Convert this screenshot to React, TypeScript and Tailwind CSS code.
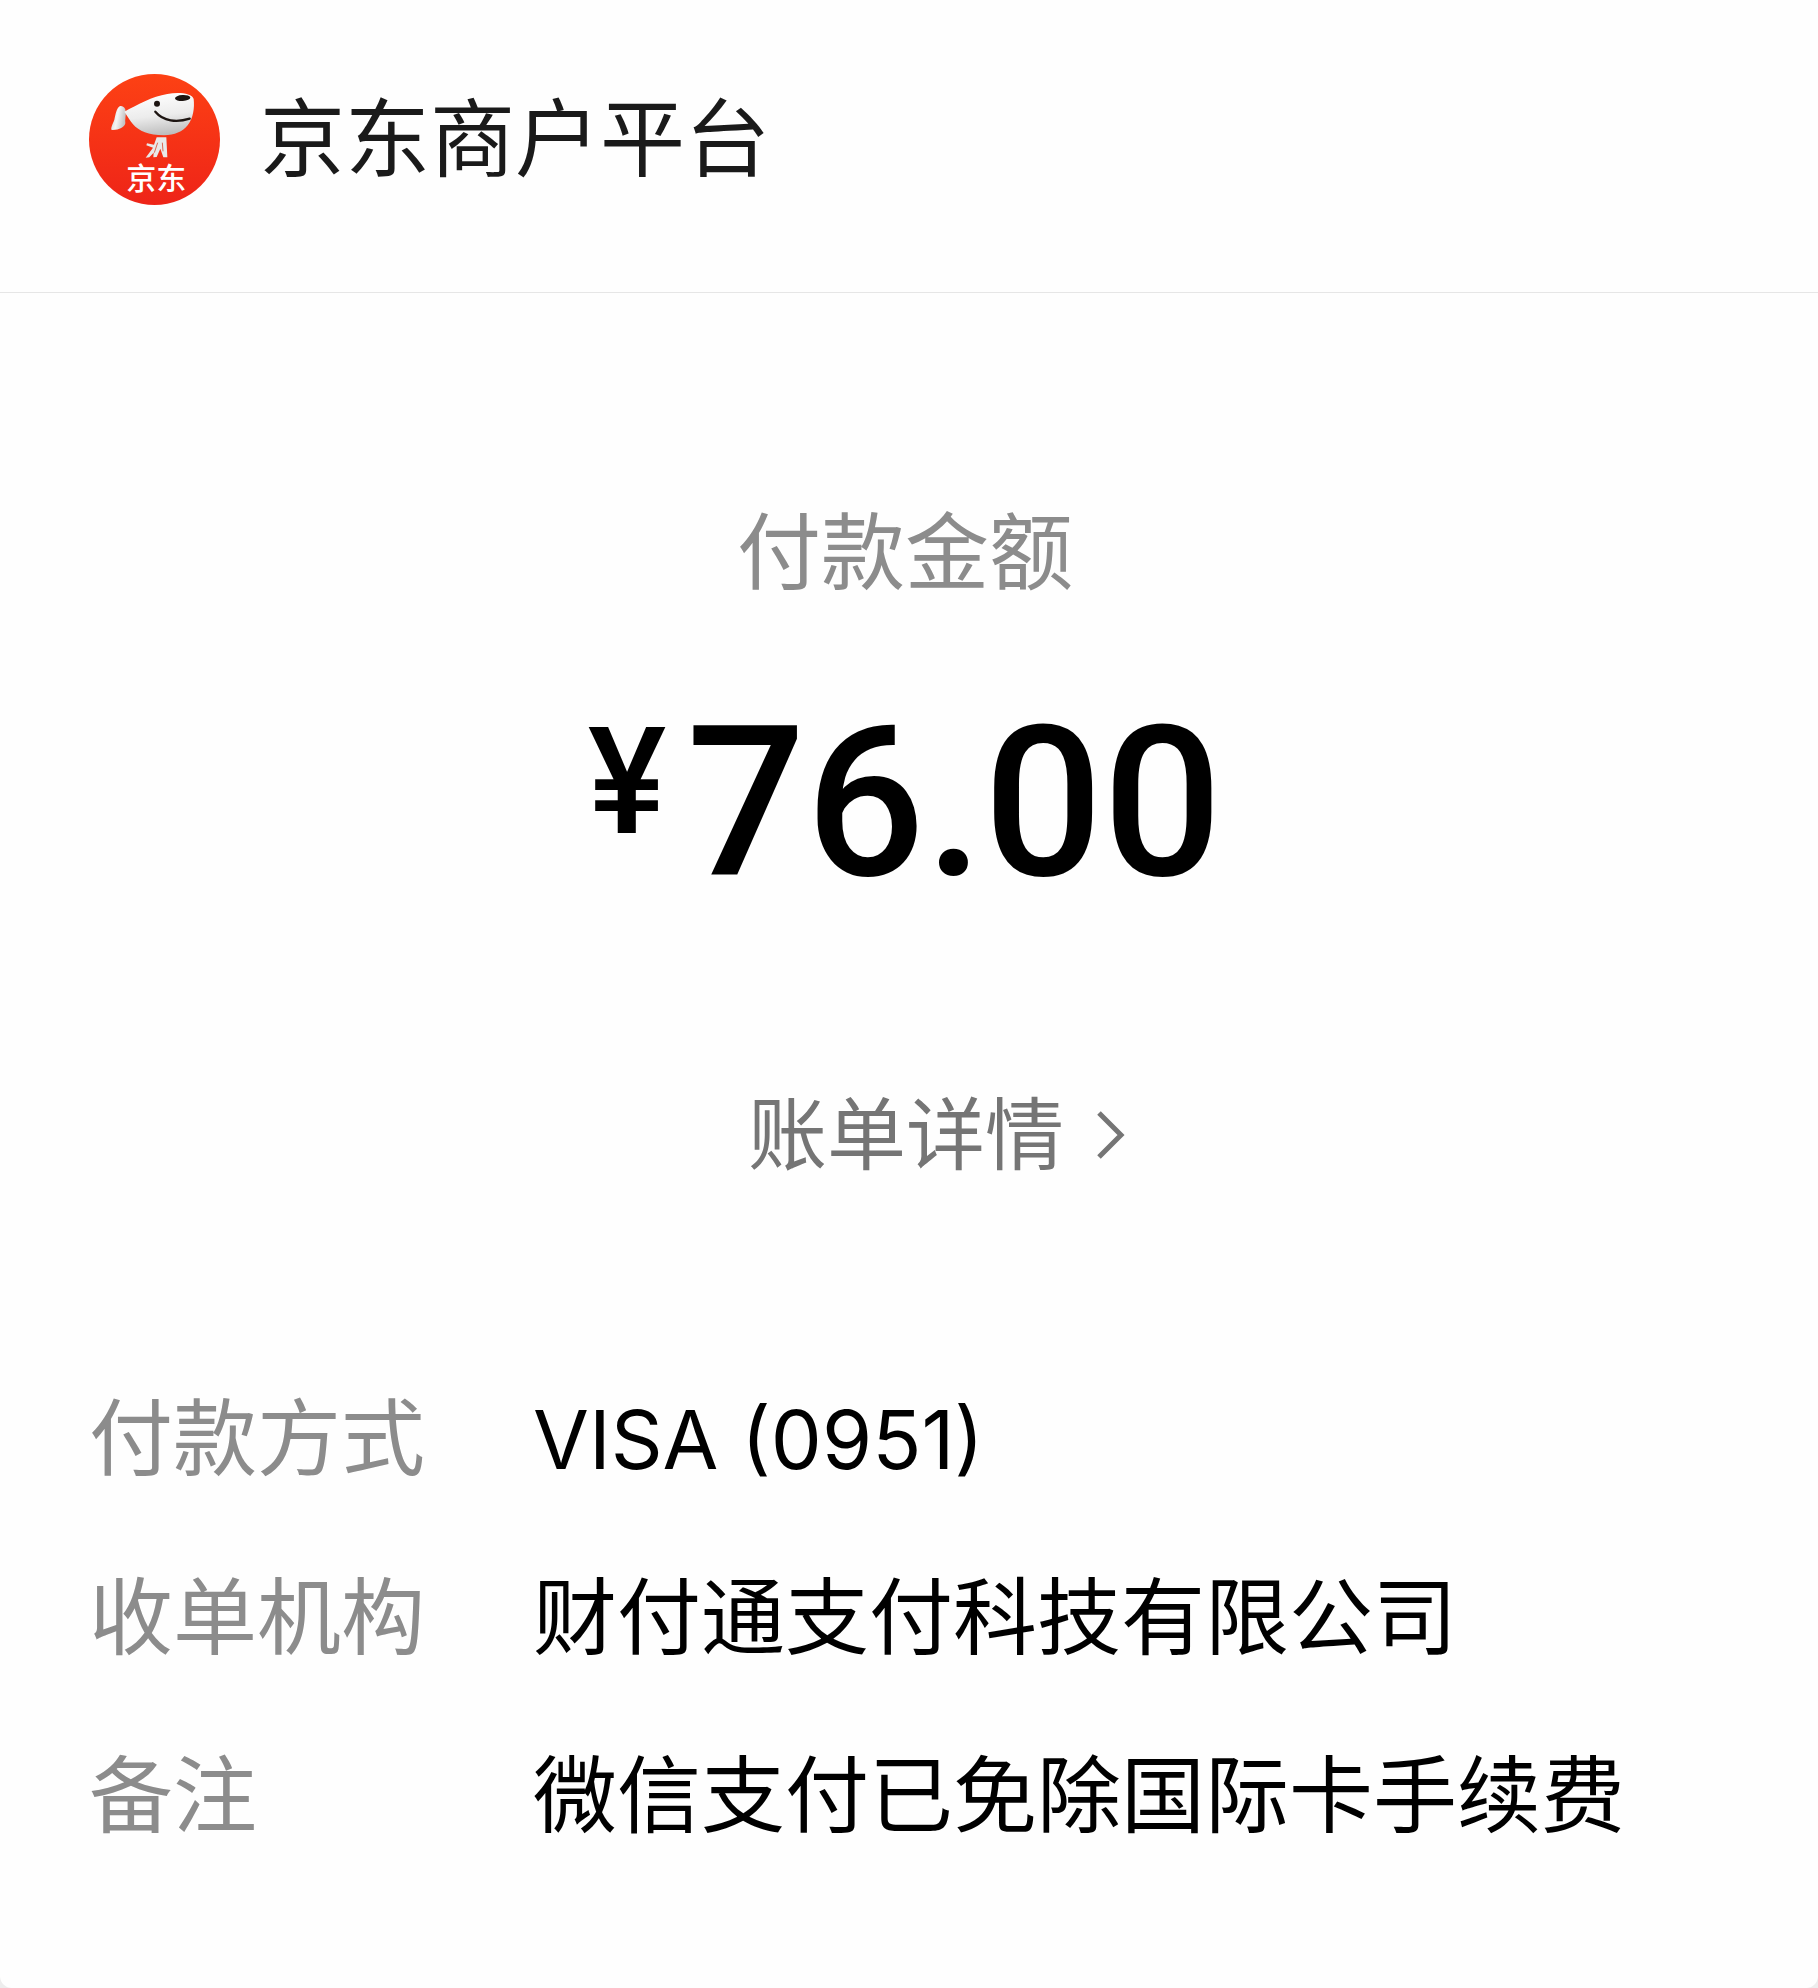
const details = [
  { label: "付款方式", value: <span className="text-[81px]">VISA (0951)</span> },
  { label: "收单机构", value: "财付通支付科技有限公司" },
  { label: "备注", value: "微信支付已免除国际卡手续费" },
];

function MerchantLogo() {
  return (
    <svg viewBox="0 0 393 393" className="w-[131px] h-[131px] shrink-0" role="img" aria-label="京东">
      <defs>
        <linearGradient id="logo-bg" x1="0" y1="0" x2="0" y2="1">
          <stop offset="0" stopColor="#fd4114" />
          <stop offset="1" stopColor="#ee2418" />
        </linearGradient>
        <linearGradient id="dog-body" x1="0.3" y1="0" x2="0.5" y2="1">
          <stop offset="0" stopColor="#ffffff" />
          <stop offset="0.55" stopColor="#ececec" />
          <stop offset="1" stopColor="#bdbdbd" />
        </linearGradient>
        <linearGradient id="dog-ear" x1="0" y1="0" x2="1" y2="0.3">
          <stop offset="0" stopColor="#cfcfcf" />
          <stop offset="0.5" stopColor="#f5f5f5" />
          <stop offset="1" stopColor="#c4c4c4" />
        </linearGradient>
      </defs>
      <circle cx="196.5" cy="196.5" r="196.5" fill="url(#logo-bg)" />
      {/* legs */}
      <path d="M203 190 L232 190 L235 250 L223 250 L214 224 L203 249 L193 250 L194 236 L181 250 L170 251 L192 221 L172 214 L174 208 L195 212 Z" fill="#e9e9e9" />
      <path d="M206 206 L196 236 M220 206 L222 232" stroke="#d86a55" strokeWidth="3" fill="none" />
      {/* ear */}
      <path d="M92 97 C101 94 109 101 110 112 C112 124 107 137 109 148 C106 160 90 169 68 168 C64 162 71 151 76 137 C80 120 82 104 92 97 Z" fill="url(#dog-ear)" />
      {/* head */}
      <path d="M106 113 C144 93 190 67 235 60 C268 54 309 57 314 75 C317 102 313 132 296 154 C281 173 257 184 225 184 C178 184 150 171 132 151 C123 140 116 127 106 113 Z" fill="url(#dog-body)" />
      <ellipse cx="281" cy="72" rx="23" ry="9" transform="rotate(-3 281 72)" fill="#1d1512" />
      <circle cx="204" cy="89" r="9" fill="#1d1512" />
      <path d="M199 113 C223 142 263 146 302 134" stroke="#1d1512" strokeWidth="7" strokeLinecap="round" fill="none" />
      <text x="202" y="346" textAnchor="middle" fontSize="90" fill="#fff" className="font-['Noto_Sans_CJK_SC',sans-serif] font-medium">
        京东
      </text>
    </svg>
  );
}

export default function App() {
  return (
    <div className="min-h-screen bg-[#ededed] font-['Inter','Noto_Sans_CJK_SC',sans-serif] text-[84px] leading-[120px] text-black">
      <main className="min-h-screen bg-[#fefefe] rounded-b-xl">
        <header className="flex items-center gap-10 px-[89px] pt-[74px] pb-[87px] border-b border-[#e6e6e6]">
          <MerchantLogo />
          <h1 className="text-[85px] text-[#1a1a1a]">京东商户平台</h1>
        </header>

        <section className="flex flex-col items-center pr-2 pt-[200px]">
          <h2 className="text-[#8c8c8c]">付款金额</h2>
          <p className="flex items-start gap-5 mt-[67px] font-['Roboto',sans-serif] font-medium">
            <span className="pt-4 text-[148px] leading-[174px]">¥</span>
            <span className="text-[210px] leading-[246px]">76.00</span>
          </p>
          <a href="#bill" className="flex items-center gap-8 pl-16 mt-[149px] text-[79px] text-[#757575]">
            账单详情
            <svg viewBox="0 0 30 50" className="w-[30px] h-[50px]" fill="none" stroke="currentColor" strokeWidth="5">
              <path d="M3 3 L25 25 L3 47" />
            </svg>
          </a>
        </section>

        <dl className="grid grid-cols-[auto_1fr] gap-x-[108px] gap-y-[58px] px-[89px] pt-[184px] pb-20">
          {details.map((item) => (
            <div key={item.label} className="contents">
              <dt className="text-[#8c8c8c]">{item.label}</dt>
              <dd>{item.value}</dd>
            </div>
          ))}
        </dl>
      </main>
    </div>
  );
}
